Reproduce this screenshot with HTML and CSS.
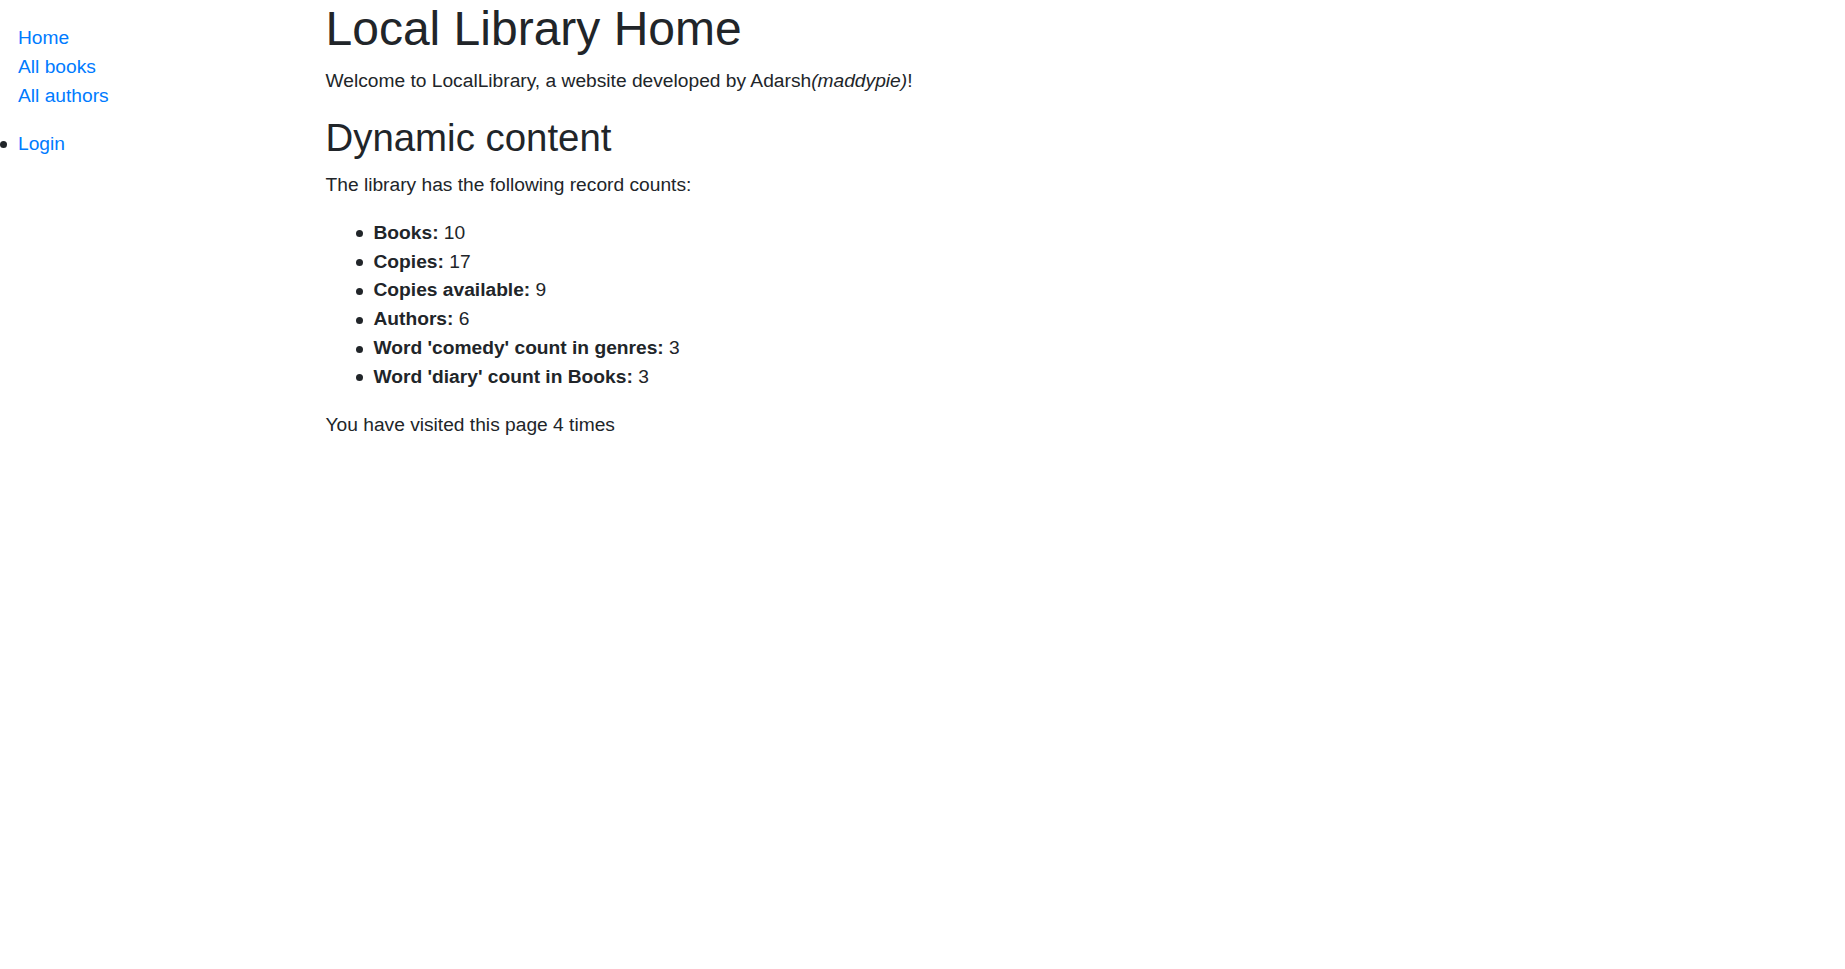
FILE: index.html
```html
<!DOCTYPE html>
<html lang="en">
<head>
<meta charset="utf-8">
<title>Local Library</title>
<link rel="stylesheet" href="styles.css">
</head>
<body>
<div class="container-fluid">
  <div class="row">
    <div class="col-sidebar">
      <ul class="sidebar-nav">
        <li><a href="#">Home</a></li>
        <li><a href="#">All books</a></li>
        <li><a href="#">All authors</a></li>
      </ul>
      <ul class="login-list bullets">
        <li><a href="#">Login</a></li>
      </ul>
    </div>
    <div class="col-main">
      <h1 class="page-title">Local Library Home</h1>
      <p class="text">Welcome to LocalLibrary, a website developed by Adarsh<em>(maddypie)</em>!</p>
      <h2 class="section-title">Dynamic content</h2>
      <p class="text">The library has the following record counts:</p>
      <ul class="counts bullets">
        <li><strong>Books:</strong> 10</li>
        <li><strong>Copies:</strong> 17</li>
        <li><strong>Copies available:</strong> 9</li>
        <li><strong>Authors:</strong> 6</li>
        <li><strong>Word 'comedy' count in genres:</strong> 3</li>
        <li><strong>Word 'diary' count in Books:</strong> 3</li>
      </ul>
      <p class="text">You have visited this page 4 times</p>
    </div>
  </div>
</div>
</body>
</html>
```
FILE: styles.css
```css
html, body {
  margin: 0;
  padding: 0;
  background: #fff;
}
body {
  font-family: "Liberation Sans", Arial, sans-serif;
  font-size: 19.2px;
  line-height: 1.5;
  color: #212529;
}
.container-fluid {
  padding: 0 18px;
}
.row {
  display: flex;
  margin: 0 -18px;
}
.col-sidebar {
  flex: 0 0 16.6667%;
  max-width: 16.6667%;
  padding: 0 18px;
  box-sizing: border-box;
}
.col-main {
  flex: 0 0 83.3333%;
  max-width: 83.3333%;
  padding: 0 18px;
  box-sizing: border-box;
}
a {
  color: #007bff;
  text-decoration: none;
}
.sidebar-nav {
  margin: 24px 0 19.2px;
  padding: 0;
  list-style: none;
}
.login-list {
  margin: 0 0 19.2px;
  padding: 0;
}
.bullets {
  list-style: none;
}
.bullets li::before {
  content: "";
  display: inline-block;
  width: 7px;
  height: 7px;
  border-radius: 50%;
  background: #212529;
  margin-left: -18px;
  margin-right: 11px;
  vertical-align: 1.5px;
}
.page-title {
  margin: 0 0 9.6px;
  font-size: 48px;
  font-weight: 500;
  line-height: 1.2;
}
.section-title {
  margin: 0 0 9.6px;
  font-size: 38.4px;
  font-weight: 500;
  line-height: 1.2;
}
.text {
  margin: 0 0 19.2px;
}
.counts {
  margin: 0 0 19.2px;
  padding-left: 48px;
}
.counts strong {
  font-weight: bold;
}
```
